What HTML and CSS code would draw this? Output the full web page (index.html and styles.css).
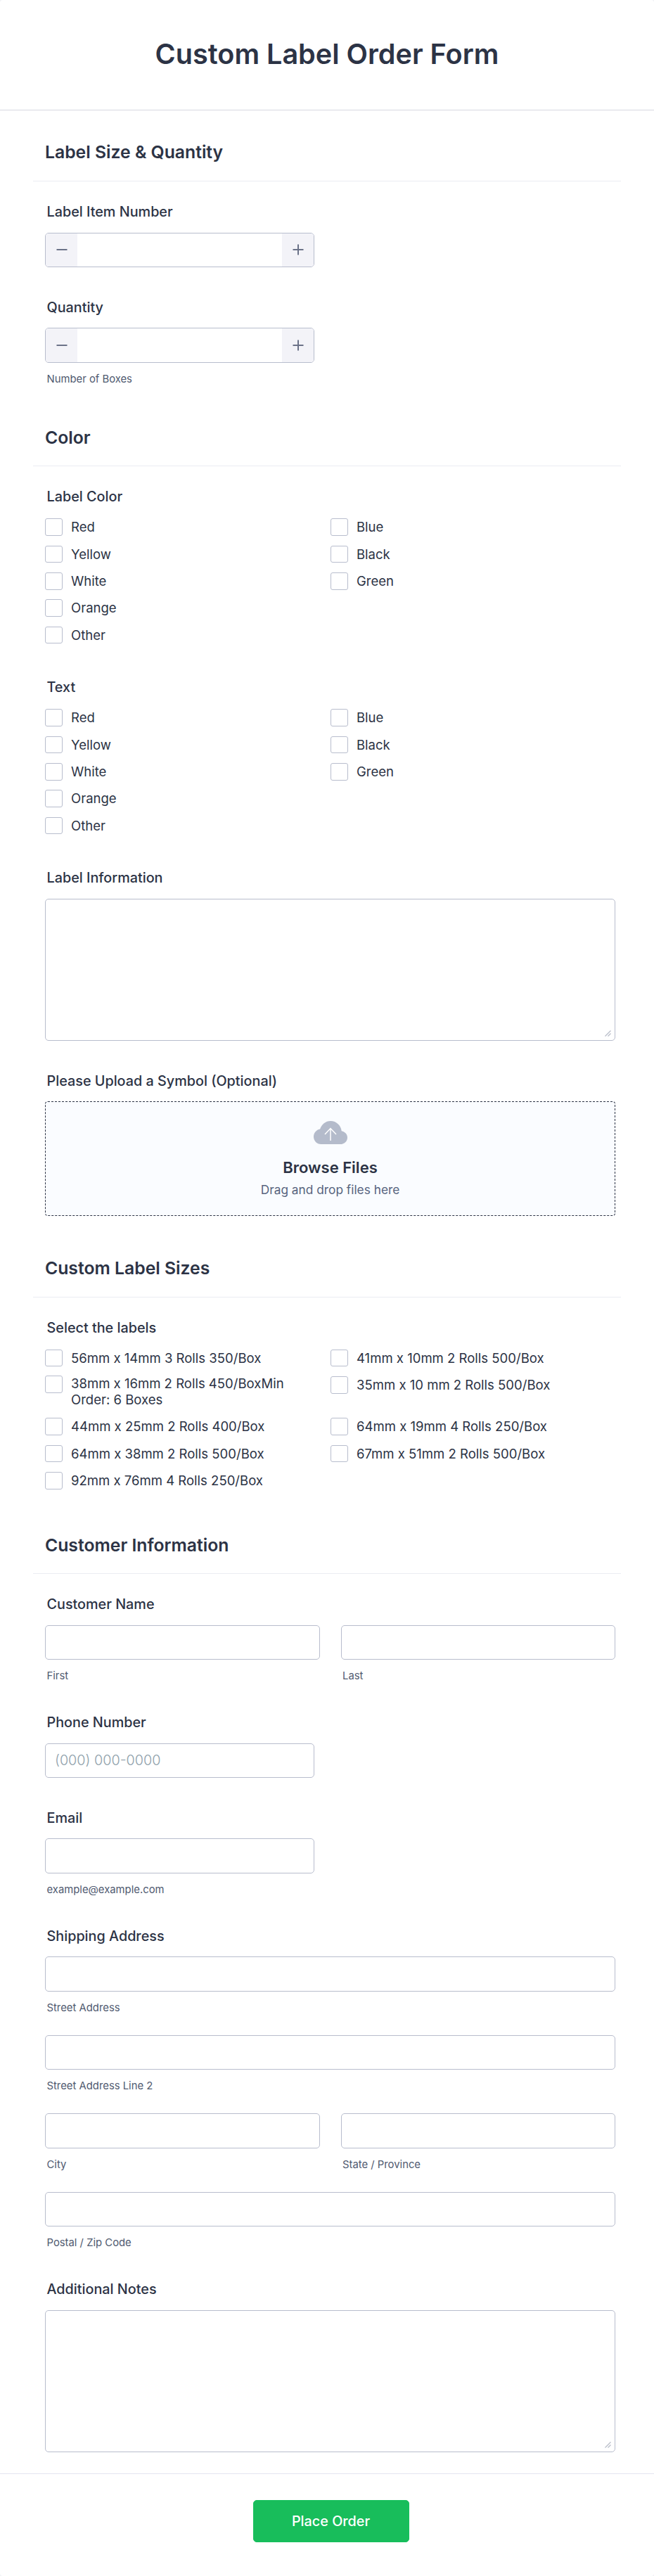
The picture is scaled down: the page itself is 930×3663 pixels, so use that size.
FILE: index.html
```html
<!DOCTYPE html>
<html lang="en">
	<head>
		<meta charset="utf-8">
		<title>Custom Label Order Form</title>
		<link rel="stylesheet" href="styles.css">
	</head>
	<body>
		<form class="form">
			<div class="formHeader">
				<h1 class="title">Custom Label Order Form</h1>
			</div>

			<h2 class="section">Label Size &amp; Quantity</h2>
			<div class="fields">
				<div class="field">
					<label class="label" for="itemNumber">Label Item Number</label>
					<div class="spinner">
						<button type="button" class="spin"><svg width="16" height="16" viewBox="0 0 16 16"><path d="M0.5 8H15.5"/></svg></button>
						<input type="text" class="spinInput" id="itemNumber"/>
						<button type="button" class="spin"><svg width="16" height="16" viewBox="0 0 16 16"><path d="M0.5 8H15.5M8 0.5V15.5"/></svg></button>
					</div>
				</div>
				<div class="field">
					<label class="label" for="quantity">Quantity</label>
					<div class="spinner">
						<button type="button" class="spin"><svg width="16" height="16" viewBox="0 0 16 16"><path d="M0.5 8H15.5"/></svg></button>
						<input type="text" class="spinInput" id="quantity"/>
						<button type="button" class="spin"><svg width="16" height="16" viewBox="0 0 16 16"><path d="M0.5 8H15.5M8 0.5V15.5"/></svg></button>
					</div>
					<span class="sub">Number of Boxes</span>
				</div>
			</div>

			<h2 class="section sectionNext">Color</h2>
			<div class="fields">
				<div class="field">
					<span class="label">Label Color</span>
					<div class="options">
						<label class="option"><input type="checkbox" class="check"/>Red</label>
						<label class="option"><input type="checkbox" class="check"/>Blue</label>
						<label class="option"><input type="checkbox" class="check"/>Yellow</label>
						<label class="option"><input type="checkbox" class="check"/>Black</label>
						<label class="option"><input type="checkbox" class="check"/>White</label>
						<label class="option"><input type="checkbox" class="check"/>Green</label>
						<label class="option wide"><input type="checkbox" class="check"/>Orange</label>
						<label class="option wide"><input type="checkbox" class="check"/>Other</label>
					</div>
				</div>
				<div class="field">
					<span class="label">Text</span>
					<div class="options">
						<label class="option"><input type="checkbox" class="check"/>Red</label>
						<label class="option"><input type="checkbox" class="check"/>Blue</label>
						<label class="option"><input type="checkbox" class="check"/>Yellow</label>
						<label class="option"><input type="checkbox" class="check"/>Black</label>
						<label class="option"><input type="checkbox" class="check"/>White</label>
						<label class="option"><input type="checkbox" class="check"/>Green</label>
						<label class="option wide"><input type="checkbox" class="check"/>Orange</label>
						<label class="option wide"><input type="checkbox" class="check"/>Other</label>
					</div>
				</div>
				<div class="field">
					<label class="label" for="info">Label Information</label>
					<div class="areaBox">
						<textarea class="area" id="info"></textarea>
						<svg class="grip" width="9" height="9" viewBox="0 0 9 9"><path d="M0.5 8.5L8.5 0.5M4.5 8.5L8.5 4.5"/></svg>
					</div>
				</div>
				<div class="field">
					<span class="label">Please Upload a Symbol (Optional)</span>
					<div class="upload">
						<svg class="cloud" width="48" height="33" viewBox="0 0 48 33">
							<path class="cloudShape" d="M24 0C32.300 0 38.900 6.300 39.700 14.200C44.500 15.200 48 18.800 48 23.400C48 28.800 43.600 33 38 33H10.500C4.700 33 0 28.300 0 22.500C0 17 3.900 12.500 9.100 11.600C11.300 4.900 17 0 24 0Z"/>
							<path class="cloudArrow" d="M24 28V11M16 19L24 10.500L32 19"/>
						</svg>
						<span class="browse">Browse Files</span>
						<span class="drag">Drag and drop files here</span>
					</div>
				</div>
			</div>

			<h2 class="section sectionNext">Custom Label Sizes</h2>
			<div class="fields">
				<div class="field">
					<span class="label">Select the labels</span>
					<div class="options">
						<label class="option"><input type="checkbox" class="check"/>56mm x 14mm 3 Rolls 350/Box</label>
						<label class="option"><input type="checkbox" class="check"/>41mm x 10mm 2 Rolls 500/Box</label>
						<label class="option long"><input type="checkbox" class="check"/>38mm x 16mm 2 Rolls 450/BoxMin Order: 6 Boxes</label>
						<label class="option"><input type="checkbox" class="check"/>35mm x 10 mm 2 Rolls 500/Box</label>
						<label class="option"><input type="checkbox" class="check"/>44mm x 25mm 2 Rolls 400/Box</label>
						<label class="option"><input type="checkbox" class="check"/>64mm x 19mm 4 Rolls 250/Box</label>
						<label class="option"><input type="checkbox" class="check"/>64mm x 38mm 2 Rolls 500/Box</label>
						<label class="option"><input type="checkbox" class="check"/>67mm x 51mm 2 Rolls 500/Box</label>
						<label class="option wide"><input type="checkbox" class="check"/>92mm x 76mm 4 Rolls 250/Box</label>
					</div>
				</div>
			</div>

			<h2 class="section sectionNext">Customer Information</h2>
			<div class="fields">
				<div class="field">
					<span class="label">Customer Name</span>
					<div class="pair">
						<div><input type="text" class="input"/><span class="sub">First</span></div>
						<div><input type="text" class="input"/><span class="sub">Last</span></div>
					</div>
				</div>
				<div class="field">
					<label class="label" for="phone">Phone Number</label>
					<input type="text" class="input short" id="phone" placeholder="(000) 000-0000"/>
				</div>
				<div class="field">
					<label class="label" for="email">Email</label>
					<input type="text" class="input short" id="email"/>
					<span class="sub">example@example.com</span>
				</div>
				<div class="field">
					<span class="label">Shipping Address</span>
					<div class="address">
						<div><input type="text" class="input"/><span class="sub">Street Address</span></div>
						<div><input type="text" class="input"/><span class="sub">Street Address Line 2</span></div>
						<div class="pair">
							<div><input type="text" class="input"/><span class="sub">City</span></div>
							<div><input type="text" class="input"/><span class="sub">State / Province</span></div>
						</div>
						<div><input type="text" class="input"/><span class="sub">Postal / Zip Code</span></div>
					</div>
				</div>
				<div class="field">
					<label class="label" for="notes">Additional Notes</label>
					<div class="areaBox">
						<textarea class="area" id="notes"></textarea>
						<svg class="grip" width="9" height="9" viewBox="0 0 9 9"><path d="M0.5 8.5L8.5 0.5M4.5 8.5L8.5 4.5"/></svg>
					</div>
				</div>
			</div>

			<div class="formFooter">
				<button type="button" class="submit">Place Order</button>
			</div>
		</form>
	</body>
</html>
```
FILE: styles.css
```css
*{
	box-sizing: border-box;
}
body{
	margin: 0;
	background-color: #f0f1f5;
	font-family: Inter, sans-serif;
	color: #2c3345;
}
input, textarea, button{
	font-family: inherit;
}
.form{
	height: 3663px;
	background-color: #fff;
	border-radius: 4px;
}
.formHeader{
	height: 157px;
	padding-top: 47px;
	border-bottom: 1px solid #d7d8e1;
	text-align: center;
}
.title{
	margin: 0;
	font-size: 39.6px;
	line-height: 60px;
	font-weight: 600;
}
.section{
	height: 101px;
	margin: 0 47px;
	padding: 44px 17px 0;
	border-bottom: 1px solid #ebecf2;
	font-size: 24.740px;
	line-height: 31px;
	font-weight: 600;
}
.sectionNext{
	height: 115.500px;
	padding-top: 59px;
}
.fields{
	padding: 31px 55px 0 64px;
}
.field{
	margin-bottom: 44.900px;
}
.field:last-child{
	margin-bottom: 0;
}
.label{
	display: block;
	padding-left: 2.500px;
	margin-bottom: 16.500px;
	font-size: 19.8px;
	line-height: 25px;
	font-weight: 500;
}
.sub{
	display: block;
	padding-left: 2.500px;
	margin-top: 14px;
	font-size: 14.840px;
	line-height: 18px;
	color: #505a70;
}
.input{
	display: block;
	width: 100%;
	height: 49.500px;
	padding: 0 13px;
	border: 1px solid #b8bdcd;
	border-radius: 5px;
	background-color: #fff;
	font-size: 19.8px;
}
.input::placeholder{
	color: #8fa1ab;
	font-weight: 300;
}
.short{
	width: 383px;
}
.spinner{
	display: flex;
	width: 383px;
	height: 49.500px;
	border: 1px solid #b8bdcd;
	border-radius: 5px;
	overflow: hidden;
}
.spin{
	display: flex;
	width: 45px;
	padding: 0;
	border: 0;
	align-items: center;
	justify-content: center;
	background-color: #f3f3f8;
}
.spin path{
	fill: none;
	stroke: #6b7288;
	stroke-width: 2;
}
.spinInput{
	flex: 1;
	min-width: 0;
	border: 0;
}
.options{
	display: grid;
	grid-template-columns: 383px 383px;
	column-gap: 23px;
	row-gap: 13.650px;
	padding: 1.500px 0 5px;
}
.option{
	display: flex;
	gap: 12px;
	font-size: 18.550px;
	line-height: 24.700px;
}
.long{
	margin-top: -1px;
	line-height: 23.300px;
}
.wide{
	grid-column: 1 / 3;
}
.check{
	appearance: none;
	flex: none;
	width: 25px;
	height: 24.700px;
	margin: 0;
	border: 1px solid #b8bdcd;
	border-radius: 3px;
	background-color: #fff;
}
.pair{
	display: grid;
	grid-template-columns: 1fr 1fr;
	gap: 30px;
}
.address{
	display: grid;
	gap: 30px;
}
.areaBox{
	position: relative;
}
.area{
	display: block;
	width: 100%;
	height: 202px;
	border: 1px solid #b8bdcd;
	border-radius: 5px;
	resize: none;
}
.grip{
	position: absolute;
	right: 6px;
	bottom: 6px;
}
.grip path{
	fill: none;
	stroke: #b8bdc9;
	stroke-width: 1.300;
}
.upload{
	display: flex;
	height: 163px;
	padding-top: 27px;
	border: 1px dashed #2c3345;
	border-radius: 4px;
	flex-direction: column;
	align-items: center;
	background-color: #fafcff;
}
.cloudShape{
	fill: #b4bbcb;
}
.cloudArrow{
	fill: none;
	stroke: #fff;
	stroke-width: 1.500;
}
.browse{
	margin-top: 19px;
	font-size: 22px;
	line-height: 28px;
	font-weight: 600;
}
.drag{
	margin-top: 7px;
	font-size: 17.300px;
	line-height: 22px;
	color: #57647e;
}
.formFooter{
	display: flex;
	margin-top: 30px;
	padding: 37px 0 0 11px;
	border-top: 1px solid #e3e5f0;
	justify-content: center;
}
.submit{
	width: 222px;
	height: 60px;
	border: 1px solid #16c15d;
	border-radius: 5px;
	background-color: #18bd5b;
	color: #fff;
	font-size: 19.8px;
	font-weight: 500;
}
```
